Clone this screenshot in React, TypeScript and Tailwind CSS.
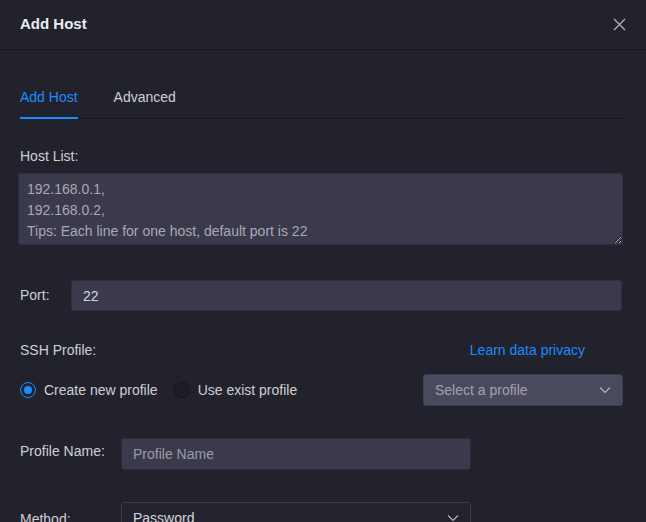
import { useState } from 'react'

const font = { fontFamily: '"Liberation Sans", Arial, sans-serif' }

function Chevron() {
  return (
    <svg width="12" height="8" viewBox="0 0 12 8" fill="none" className="shrink-0">
      <path d="M1 1.5 L6 6.5 L11 1.5" stroke="#b9b9c4" strokeWidth="1.1" />
    </svg>
  )
}

function Radio({ checked, label, onClick }: { checked: boolean; label: string; onClick: () => void }) {
  return (
    <button onClick={onClick} className="flex items-center gap-2 text-[14px] text-[#cfcfd6]">
      <span
        className={
          checked
            ? 'w-4 h-4 rounded-full border border-[#1a8cff] flex items-center justify-center'
            : 'w-4 h-4 rounded-full border border-[#15151c] bg-[#1e1e27]'
        }
      >
        {checked && <span className="w-2 h-2 rounded-full bg-[#1a8cff]" />}
      </span>
      {label}
    </button>
  )
}

export default function App() {
  const [tab, setTab] = useState<'host' | 'advanced'>('host')
  const [newProfile, setNewProfile] = useState(true)

  return (
    <div className="w-[646px] h-[522px] bg-[#22222c] overflow-hidden" style={font}>
      {/* Header */}
      <div className="h-[50px] flex items-center justify-between pl-5 pr-[20px] border-b border-[#16161d]">
        <h1 className="text-[15px] font-bold text-[#ececf0]">Add Host</h1>
        <button className="text-[#b5b5bf]">
          <svg width="13" height="13" viewBox="0 0 13 13">
            <path d="M1 1 L12 12 M12 1 L1 12" stroke="currentColor" strokeWidth="1.2" />
          </svg>
        </button>
      </div>

      <div className="pl-5 pr-[23px]">
        {/* Tabs */}
        <div className="mt-[37px] flex gap-[36px] border-b border-[#17171e]">
          <button
            onClick={() => setTab('host')}
            className={
              tab === 'host'
                ? 'pb-[10px] -mb-px border-b-2 border-[#1a8cff] text-[14px] leading-5 text-[#1a8cff]'
                : 'pb-[10px] -mb-px border-b-2 border-transparent text-[14px] leading-5 text-[#cfcfd6]'
            }
          >
            Add Host
          </button>
          <button
            onClick={() => setTab('advanced')}
            className={
              tab === 'advanced'
                ? 'pb-[10px] -mb-px border-b-2 border-[#1a8cff] text-[14px] leading-5 text-[#1a8cff]'
                : 'pb-[10px] -mb-px border-b-2 border-transparent text-[14px] leading-5 text-[#cfcfd6]'
            }
          >
            Advanced
          </button>
        </div>

        {/* Host list */}
        <p className="mt-[27px] text-[14px] leading-5 text-[#cfcfd6]">Host List:</p>
        <textarea
          className="mt-[7px] -ml-[2px] w-[605px] h-[72px] block resize-y rounded-[3px] bg-[#3b3a4c] border border-[#2f2e3e] px-[8px] pt-[5px] text-[14px] leading-[21px] text-[#a9a9b3] placeholder:text-[#a9a9b3] outline-none"
          placeholder={'192.168.0.1,\n192.168.0.2,\nTips: Each line for one host, default port is 22'}
        />

        {/* Port */}
        <div className="mt-[35px] flex items-center">
          <label className="w-[51px] text-[14px] text-[#cfcfd6]">Port:</label>
          <input
            defaultValue="22"
            className="w-[551px] h-[31px] rounded-[3px] bg-[#3b3a4c] border border-[#2f2e3e] px-[11px] text-[14px] text-[#d6d6dc] outline-none"
          />
        </div>

        {/* SSH profile */}
        <div className="mt-[29px] flex items-center justify-between pr-[38px]">
          <span className="text-[14px] leading-5 text-[#cfcfd6]">SSH Profile:</span>
          <a className="text-[14px] leading-5 text-[#1a8cff]">Learn data privacy</a>
        </div>

        <div className="mt-[14px] flex items-center justify-between">
          <div className="flex items-center gap-4">
            <Radio checked={newProfile} label="Create new profile" onClick={() => setNewProfile(true)} />
            <Radio checked={!newProfile} label="Use exist profile" onClick={() => setNewProfile(false)} />
          </div>
          <div className="w-[200px] h-[32px] rounded-[3px] bg-[#4a4a5e] border border-[#3e3e50] flex items-center justify-between pl-[11px] pr-[11px] text-[14px] text-[#a3a3ae]">
            Select a profile
            <Chevron />
          </div>
        </div>

        {/* Profile name */}
        <div className="mt-[32px] flex items-center">
          <label className="w-[101px] -mt-[6px] text-[14px] text-[#cfcfd6]">Profile Name:</label>
          <input
            placeholder="Profile Name"
            className="w-[350px] h-[32px] rounded-[3px] bg-[#3b3a4c] border border-[#2d2c3b] px-[11px] text-[14px] text-[#d6d6dc] placeholder:text-[#9c9ca7] outline-none"
          />
        </div>

        {/* Method */}
        <div className="mt-[32px] flex items-center">
          <label className="w-[101px] text-[14px] text-[#cfcfd6] mt-[2px]">Method:</label>
          <div className="w-[350px] h-[32px] rounded-[3px] bg-[#23232d] border border-[#3b3b4b] flex items-center justify-between px-[11px] text-[14px] text-[#d6d6dc]">
            Password
            <Chevron />
          </div>
        </div>
      </div>
    </div>
  )
}
